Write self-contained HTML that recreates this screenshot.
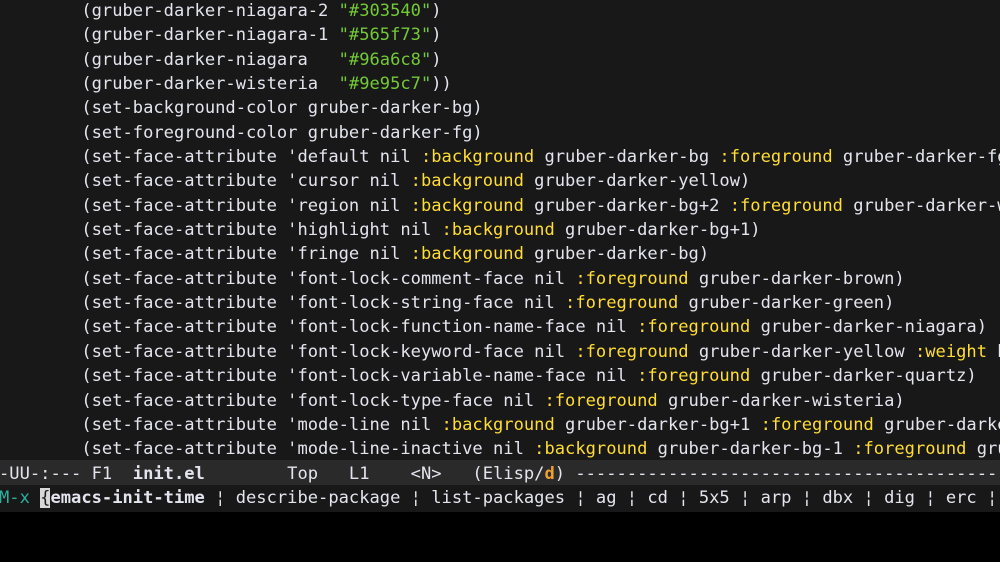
<!DOCTYPE html>
<html><head><meta charset="utf-8"><style>
html,body{margin:0;padding:0;background:#000;width:1000px;height:562px;overflow:hidden;position:relative}
#ed{position:absolute;left:0;top:0;width:1000px;height:460px;background:#181818}
.l{position:absolute;left:-1px;width:1001px;overflow:hidden;white-space:pre;font-family:"DejaVu Sans Mono","Liberation Mono",monospace;font-size:17.1px;line-height:24.35px;color:#e4e4ef}
.s{color:#73c936}.k{color:#ffdd33}
#ml{position:absolute;left:0;top:460px;width:1000px;height:25px;background:#2a2a2a}
#mb{position:absolute;left:0;top:485px;width:1000px;height:27px;background:#181818}
b{font-weight:bold}
</style></head><body>
<div id="ed"></div><div id="ml"></div><div id="mb"></div>
<div class="l" style="top:-1px">        (gruber-darker-niagara-2 <span class="s">"#303540"</span>)
        (gruber-darker-niagara-1 <span class="s">"#565f73"</span>)
        (gruber-darker-niagara   <span class="s">"#96a6c8"</span>)
        (gruber-darker-wisteria  <span class="s">"#9e95c7"</span>))
        (set-background-color gruber-darker-bg)
        (set-foreground-color gruber-darker-fg)
        (set-face-attribute 'default nil <span class="k">:background</span> gruber-darker-bg <span class="k">:foreground</span> gruber-darker-fg)
        (set-face-attribute 'cursor nil <span class="k">:background</span> gruber-darker-yellow)
        (set-face-attribute 'region nil <span class="k">:background</span> gruber-darker-bg+2 <span class="k">:foreground</span> gruber-darker-white)
        (set-face-attribute 'highlight nil <span class="k">:background</span> gruber-darker-bg+1)
        (set-face-attribute 'fringe nil <span class="k">:background</span> gruber-darker-bg)
        (set-face-attribute 'font-lock-comment-face nil <span class="k">:foreground</span> gruber-darker-brown)
        (set-face-attribute 'font-lock-string-face nil <span class="k">:foreground</span> gruber-darker-green)
        (set-face-attribute 'font-lock-function-name-face nil <span class="k">:foreground</span> gruber-darker-niagara)
        (set-face-attribute 'font-lock-keyword-face nil <span class="k">:foreground</span> gruber-darker-yellow <span class="k">:weight</span> bold)
        (set-face-attribute 'font-lock-variable-name-face nil <span class="k">:foreground</span> gruber-darker-quartz)
        (set-face-attribute 'font-lock-type-face nil <span class="k">:foreground</span> gruber-darker-wisteria)
        (set-face-attribute 'mode-line nil <span class="k">:background</span> gruber-darker-bg+1 <span class="k">:foreground</span> gruber-darker-white)
        (set-face-attribute 'mode-line-inactive nil <span class="k">:background</span> gruber-darker-bg-1 <span class="k">:foreground</span> gruber-darker-quartz)
-UU-:--- F1  <b>init.el</b>        Top   L1    &lt;N&gt;   (Elisp/<b style="color:#f0a030">d</b>) ------------------------------------------------
<span style="color:#2ab0a0">M-x</span> <span style="background:#d8d8d8;color:#181818">{</span><b>emacs-init-time</b> ¦ describe-package ¦ list-packages ¦ ag ¦ cd ¦ 5x5 ¦ arp ¦ dbx ¦ dig ¦ erc ¦</div>
</body></html>
